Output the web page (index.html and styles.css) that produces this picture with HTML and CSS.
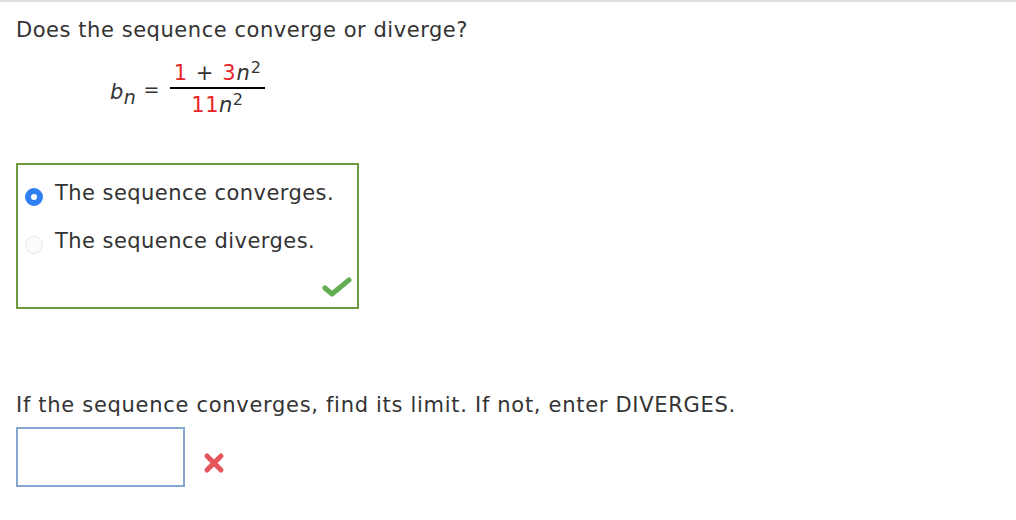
FILE: index.html
```html
<!DOCTYPE html>
<html>
<head>
<meta charset="utf-8">
<link rel="stylesheet" href="styles.css">
</head>
<body>
<div class="page">
  <p class="question">Does the sequence converge or diverge?</p>
  <div class="formula">
    <span class="lhs"><i>b</i><sub><i>n</i></sub></span>
    <span class="eq">=</span>
    <span class="frac">
      <span class="num"><span class="red">1</span> + <span class="red">3</span><i>n</i><sup>2</sup></span>
      <span class="den"><span class="red">11</span><i>n</i><sup>2</sup></span>
    </span>
  </div>
  <div class="choices">
    <label class="choice"><span class="radio checked"></span><span>The sequence converges.</span></label>
    <label class="choice"><span class="radio"></span><span>The sequence diverges.</span></label>
    <div class="mark">
      <svg width="30" height="20" viewBox="0 0 30 20"><path d="M3 11 L10 17 L27 3" fill="none" stroke="#63ad53" stroke-width="5" stroke-linecap="round" stroke-linejoin="round"/></svg>
    </div>
  </div>
  <p class="question second">If the sequence converges, find its limit. If not, enter DIVERGES.</p>
  <div class="answer">
    <div class="input"></div>
    <svg class="cross" width="22" height="22" viewBox="0 0 22 22"><path d="M4 4 L18 18 M18 4 L4 18" fill="none" stroke="#e6555b" stroke-width="5" stroke-linecap="round"/></svg>
  </div>
</div>
</body>
</html>
```
FILE: styles.css
```css
html, body { margin: 0; padding: 0; background: #fff; }
body { border-top: 2px solid #dedede; font-family: "DejaVu Sans", Verdana, sans-serif; color: #333; }
.page { padding: 0 16px; }
.question { margin: 0; font-size: 21px; letter-spacing: 0.55px; line-height: 26px; padding-top: 15px; }
.formula { display: flex; align-items: center; margin: 17px 0 0 94px; font-size: 21px; letter-spacing: 0.5px; }
.lhs { margin-top: 6px; }
.lhs sub { font-size: 19px; vertical-align: -5px; line-height: 0; }
.eq { margin: 0 10px 0 7px; font-size: 19px; }
.frac { display: inline-flex; flex-direction: column; align-items: center; }
.num { border-bottom: 2px solid #000; padding: 0 3px 1px 4px; line-height: 26px; letter-spacing: 1px; }
.den { line-height: 26px; padding-top: 3px; }
sup { font-size: 16px; vertical-align: 7px; line-height: 0; }
.red { color: #e8262a; }
.choices { margin-top: 45px; width: 343px; height: 146px; border: 2px solid #6b9b3d; box-sizing: border-box; position: relative; padding-top: 15px; }
.choice { display: flex; align-items: center; gap: 12px; font-size: 21px; letter-spacing: 0.45px; line-height: 26px; margin-left: 7px; margin-bottom: 22px; }
.radio { width: 18px; height: 18px; border-radius: 50%; border: 1px solid #e4e4e4; box-sizing: border-box; background: #fbfbfb; margin-top: 8px; flex: none; }
.radio.checked { border: 6px solid #2f7ff0; background: #fff; }
.mark { position: absolute; right: 5px; bottom: 6px; }
.second { padding-top: 83px; letter-spacing: 0.7px; }
.answer { display: flex; align-items: center; gap: 18px; margin-top: 9px; }
.input { width: 169px; height: 60px; border: 2px solid #86a6cf; box-sizing: border-box; }
.cross { margin-top: 12px; }
```
